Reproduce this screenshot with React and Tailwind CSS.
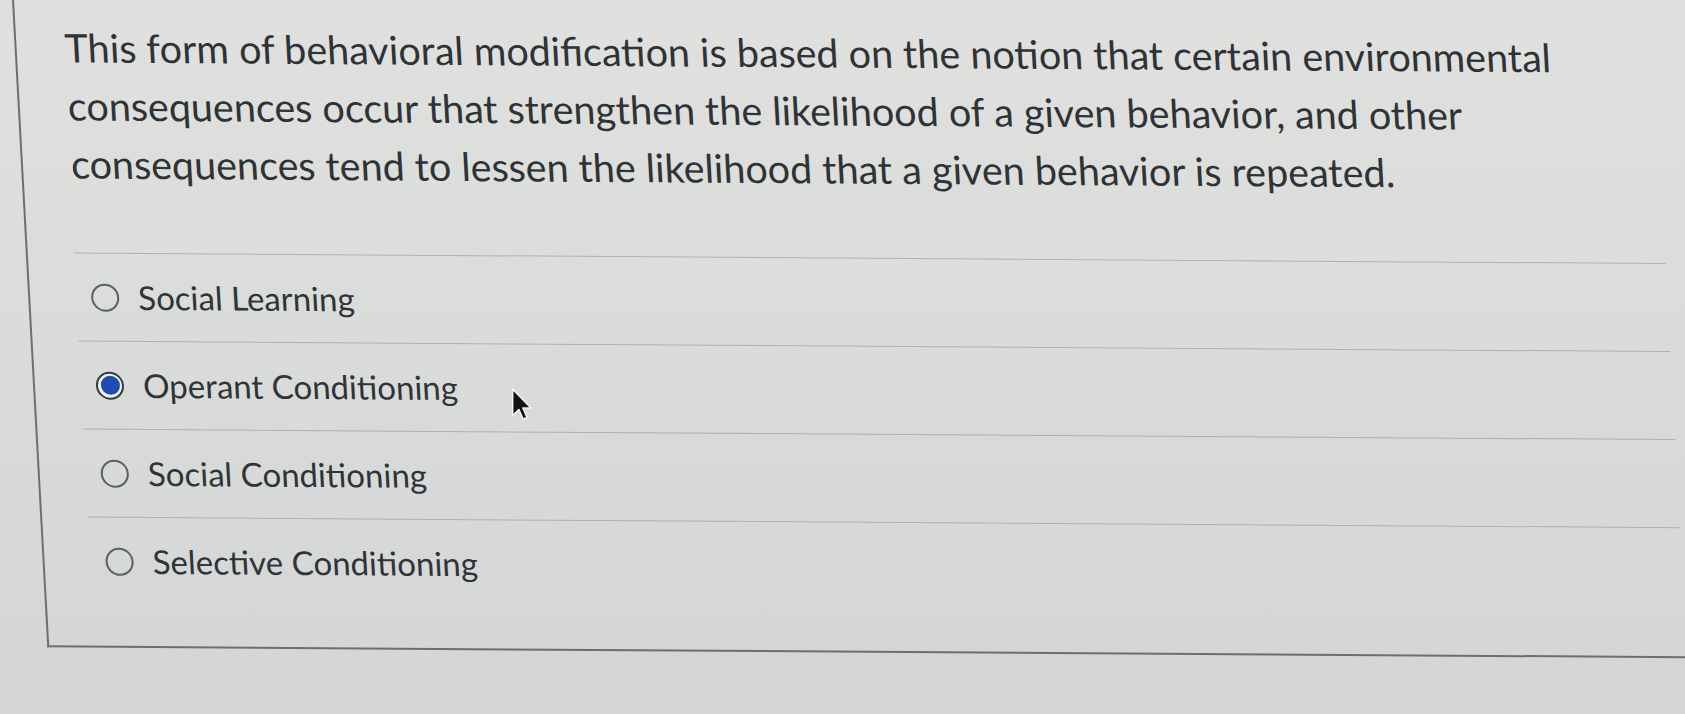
import React from 'react';

const options = [
  { id: 'social-learning', label: 'Social Learning' },
  { id: 'operant', label: 'Operant Conditioning', selected: true },
  { id: 'social-conditioning', label: 'Social Conditioning' },
  { id: 'selective', label: 'Selective Conditioning' },
];

const Radio = ({ selected }) =>
  selected ? (
    <span className="flex h-[28px] w-[28px] shrink-0 rounded-full border-[2.5px] border-[#373c40] bg-[#eef0f1] p-[2.5px]">
      <span className="h-full w-full rounded-full bg-[#1d4db3]" />
    </span>
  ) : (
    <span className="h-[28px] w-[28px] shrink-0 rounded-full border-2 border-[#5b6063]" />
  );

const Cursor = () => (
  <svg
    className="pointer-events-none absolute left-[511px] top-[388px]"
    width="22"
    height="33"
    viewBox="0 0 20 30"
  >
    <path
      d="M1.5 1 L1.5 25 L7.2 19.6 L11 28.4 L14.6 26.8 L10.8 18.2 L18.2 18.2 Z"
      fill="#111314"
      stroke="#f4f5f4"
      strokeWidth="1.4"
      strokeLinejoin="round"
    />
  </svg>
);

const QuizQuestion = () => {
  return (
    <div className="relative h-[714px] w-full overflow-hidden bg-linear-to-b from-[#e0e1df] to-[#d3d6d5] font-[Lato,sans-serif]">
      <div className="origin-top-left skew-x-[3.5deg] rotate-[0.38deg]">
        <div className="ml-[12px] w-[1800px] border-b-2 border-l-2 border-[#6c6f70] pb-[41px]">
          <p className="w-[1540px] pl-[48px] pt-[18px] text-[39.5px] leading-[58px] text-[#2e3336]">
            This form of behavioral modification is based on the notion that certain environmental
            consequences occur that strengthen the likelihood of a given behavior, and other
            consequences tend to lessen the likelihood that a given behavior is repeated.
          </p>

          <div className="ml-[46px] mt-[60px] w-[1592px]">
            {options.map((option) => (
              <label
                key={option.id}
                className="flex h-[88px] items-center gap-[19px] border-t border-[#aeb1b0] pl-[15px]"
              >
                <Radio selected={option.selected} />
                <span className="text-[33px] text-[#2f3437]">{option.label}</span>
              </label>
            ))}
          </div>
        </div>
      </div>
      <Cursor />
    </div>
  );
};

export default function App() {
  return <QuizQuestion />;
}
